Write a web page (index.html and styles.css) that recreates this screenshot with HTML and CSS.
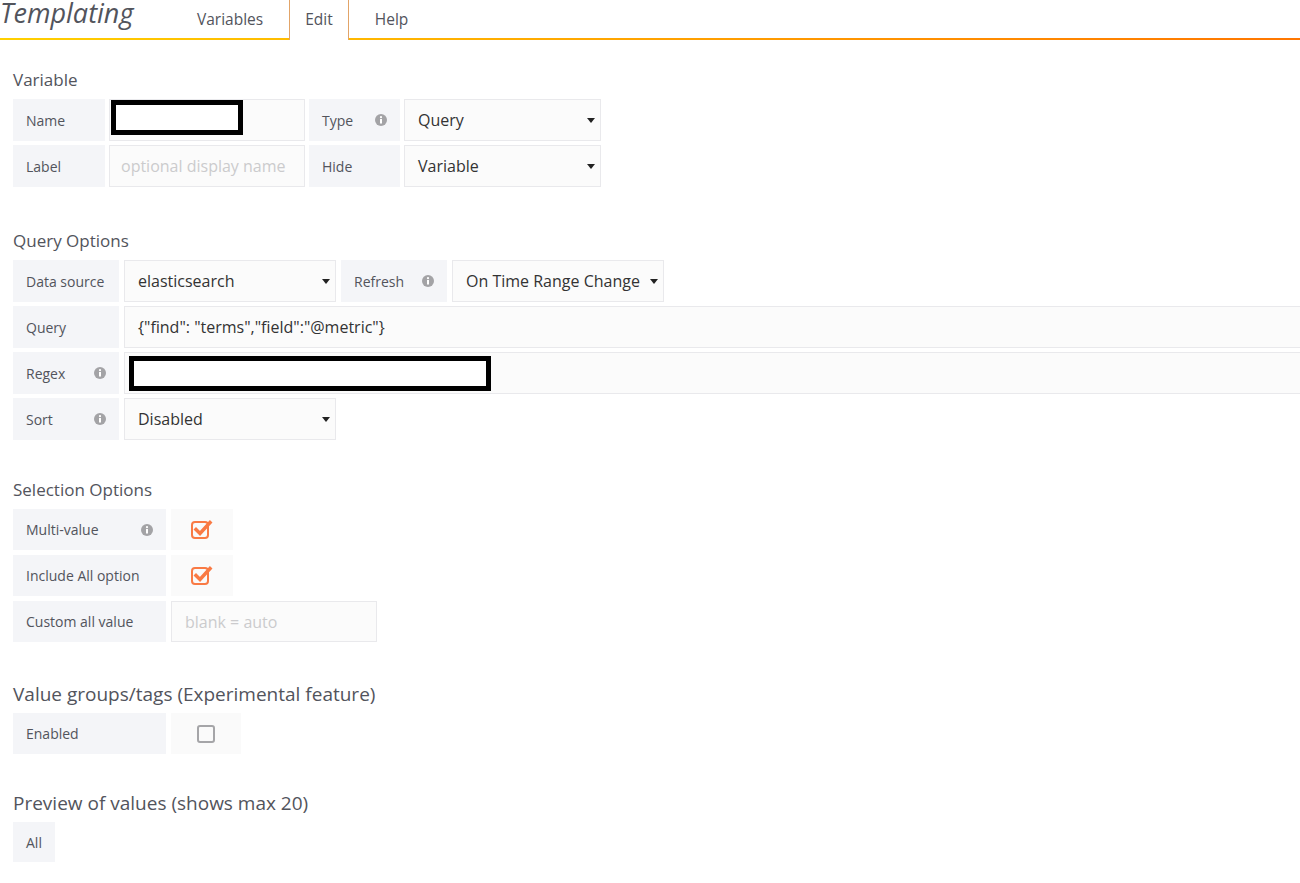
FILE: index.html
```html
<!DOCTYPE html>
<html>
<head>
<meta charset="utf-8">
<title>Templating</title>
<link rel="stylesheet" href="styles.css">
</head>
<body>
<header class="nav">
  <div class="title">Templating</div>
  <nav class="tabs">
    <div class="tab">Variables</div>
    <div class="tab active">Edit</div>
    <div class="tab">Help</div>
  </nav>
</header>

<main class="page">
  <section class="section s-variable">
    <h5 class="heading">Variable</h5>
    <div class="rows">
      <div class="row tight">
        <span class="label w92">Name</span>
        <div class="input w196"><span class="redact redact-name"></span></div>
        <span class="label w91">Type <svg class="info" viewBox="0 0 12 12"><circle cx="6" cy="6" r="6"/><rect x="5" y="5" width="2" height="4.5" fill="#fff"/><circle cx="6" cy="3.2" r="1.1" fill="#fff"/></svg></span>
        <div class="select w197"><span class="value">Query</span><span class="caret"></span></div>
      </div>
      <div class="row tight">
        <span class="label w92">Label</span>
        <div class="input w196 ph-input"><span class="placeholder">optional display name</span></div>
        <span class="label w91">Hide</span>
        <div class="select w197"><span class="value">Variable</span><span class="caret"></span></div>
      </div>
    </div>
  </section>

  <section class="section s-query">
    <h5 class="heading">Query Options</h5>
    <div class="rows">
      <div class="row">
        <span class="label w106">Data source</span>
        <div class="select w212"><span class="value">elasticsearch</span><span class="caret"></span></div>
        <span class="label w106">Refresh <svg class="info" viewBox="0 0 12 12"><circle cx="6" cy="6" r="6"/><rect x="5" y="5" width="2" height="4.5" fill="#fff"/><circle cx="6" cy="3.2" r="1.1" fill="#fff"/></svg></span>
        <div class="select w212"><span class="value">On Time Range Change</span><span class="caret"></span></div>
      </div>
      <div class="row wide">
        <span class="label w106">Query</span>
        <div class="input grow"><span class="value">{"find": "terms","field":"@metric"}</span></div>
      </div>
      <div class="row wide">
        <span class="label w106">Regex <svg class="info" viewBox="0 0 12 12"><circle cx="6" cy="6" r="6"/><rect x="5" y="5" width="2" height="4.5" fill="#fff"/><circle cx="6" cy="3.2" r="1.1" fill="#fff"/></svg></span>
        <div class="input grow"><span class="redact redact-regex"></span></div>
      </div>
      <div class="row">
        <span class="label w106">Sort <svg class="info" viewBox="0 0 12 12"><circle cx="6" cy="6" r="6"/><rect x="5" y="5" width="2" height="4.5" fill="#fff"/><circle cx="6" cy="3.2" r="1.1" fill="#fff"/></svg></span>
        <div class="select w212"><span class="value">Disabled</span><span class="caret"></span></div>
      </div>
    </div>
  </section>

  <section class="section s-select">
    <h5 class="heading">Selection Options</h5>
    <div class="rows rows-loose">
      <div class="row short">
        <span class="label w153">Multi-value <svg class="info" viewBox="0 0 12 12"><circle cx="6" cy="6" r="6"/><rect x="5" y="5" width="2" height="4.5" fill="#fff"/><circle cx="6" cy="3.2" r="1.1" fill="#fff"/></svg></span>
        <div class="check-cell w62">
          <svg class="check" viewBox="0 0 24 24"><rect x="2" y="5" width="16" height="16" rx="3"/><path d="M6 12.5 L10 16.5 L20 5.5"/></svg>
        </div>
      </div>
      <div class="row short">
        <span class="label w153">Include All option</span>
        <div class="check-cell w62">
          <svg class="check" viewBox="0 0 24 24"><rect x="2" y="5" width="16" height="16" rx="3"/><path d="M6 12.5 L10 16.5 L20 5.5"/></svg>
        </div>
      </div>
      <div class="row short">
        <span class="label w153">Custom all value</span>
        <div class="input w206"><span class="placeholder">blank = auto</span></div>
      </div>
    </div>
  </section>

  <section class="section s-tags">
    <h4 class="heading big">Value groups/tags (Experimental feature)</h4>
    <div class="rows">
      <div class="row short">
        <span class="label w153">Enabled</span>
        <div class="check-cell w70"><span class="unchecked"></span></div>
      </div>
    </div>
  </section>

  <section class="section s-preview">
    <h4 class="heading big">Preview of values (shows max 20)</h4>
    <div class="rows">
      <div class="row chip-row">
        <span class="label chip">All</span>
      </div>
    </div>
  </section>
</main>
</body>
</html>
```

FILE: styles.css
```css
html, body {
  margin: 0;
  padding: 0;
}

body {
  width: 1300px;
  height: 883px;
  overflow: hidden;
  background: #ffffff;
  font-family: "Open Sans", "Noto Sans", sans-serif;
  color: #52545c;
}

.nav {
  display: flex;
  align-items: flex-start;
  height: 40px;
  background: linear-gradient(to right, #ffd000, #ff7600) left 38px / 100% 2px no-repeat;
}

.title {
  width: 181px;
  padding-top: 1px;
  font-size: 27px;
  line-height: 23px;
  font-style: italic;
  color: #52545c;
  white-space: nowrap;
}

.tabs {
  display: flex;
  gap: 9px;
}

.tab {
  height: 38px;
  line-height: 38px;
  padding: 0 16px;
  font-size: 15.5px;
  color: #52545c;
  border-left: 1px solid transparent;
  border-right: 1px solid transparent;
}

.tab:first-child {
  padding-left: 15px;
}

.tab.active {
  height: 40px;
  background: #ffffff;
  border-left-color: #e2a468;
  border-right-color: #e2a468;
  padding: 0 15px;
}

.page {
  padding-left: 13px;
}

.s-variable { margin-top: 30px; }
.s-query { margin-top: 44px; }
.s-select { margin-top: 40px; }
.s-tags { margin-top: 41px; }
.s-preview { margin-top: 38px; }

.heading {
  margin: 0 0 9px 0;
  font-size: 17px;
  line-height: 20px;
  font-weight: 400;
  color: #52545c;
}

.heading.big {
  font-size: 19px;
  line-height: 22px;
  margin-bottom: 8px;
}

.rows {
  display: flex;
  flex-direction: column;
  gap: 4px;
}

.rows-loose {
  gap: 5px;
}

.row {
  display: flex;
  gap: 5px;
  height: 42px;
}

.row.tight {
  gap: 4px;
}

.row.short {
  height: 41px;
}

.row.chip-row {
  height: 40px;
}

.row.wide {
  width: 1320px;
}

.label {
  box-sizing: border-box;
  display: flex;
  align-items: center;
  justify-content: space-between;
  padding: 0 13px;
  background: #f4f5f8;
  font-size: 14px;
  color: #52545c;
  white-space: nowrap;
}

.info {
  width: 12px;
  height: 12px;
  fill: #a3a3a6;
  flex: none;
}

.input, .select {
  box-sizing: border-box;
  position: relative;
  display: flex;
  align-items: center;
  padding: 0 12px 0 13px;
  background: #fbfbfb;
  border: 1px solid #e9e9ec;
  font-size: 16px;
  color: #333333;
  white-space: nowrap;
}

.ph-input {
  padding-left: 11px;
}

.select {
  justify-content: space-between;
  padding-right: 5px;
}

.placeholder {
  color: #cbcbcd;
}

.caret {
  width: 0;
  height: 0;
  border-left: 4px solid transparent;
  border-right: 4px solid transparent;
  border-top: 5px solid #222;
}

.grow {
  flex: 1;
}

.w91 { width: 91px; }
.w92 { width: 92px; }
.w106 { width: 106px; }
.w153 { width: 153px; }
.w196 { width: 196px; }
.w197 { width: 197px; }
.w206 { width: 206px; }
.w212 { width: 212px; }
.w62 { width: 62px; }
.w70 { width: 70px; }

.redact {
  position: absolute;
  box-sizing: border-box;
  border: 5px solid #000;
  background: #fff;
}

.redact-name {
  left: 1px;
  top: 0;
  width: 132px;
  height: 35px;
}

.redact-regex {
  left: 4px;
  top: 3px;
  width: 362px;
  height: 35px;
}

.check-cell {
  display: flex;
  align-items: center;
  justify-content: center;
  background: #fafafa;
}

.check {
  width: 24px;
  height: 24px;
  fill: none;
  stroke: #f97a44;
  margin-top: -2px;
}

.check rect {
  stroke-width: 2;
}

.check path {
  stroke-width: 3.5;
  stroke-linecap: square;
  stroke-linejoin: miter;
}

.unchecked {
  box-sizing: border-box;
  width: 18px;
  height: 18px;
  border: 2px solid #a5a5a8;
  border-radius: 3px;
  margin-right: 1px;
}
```
